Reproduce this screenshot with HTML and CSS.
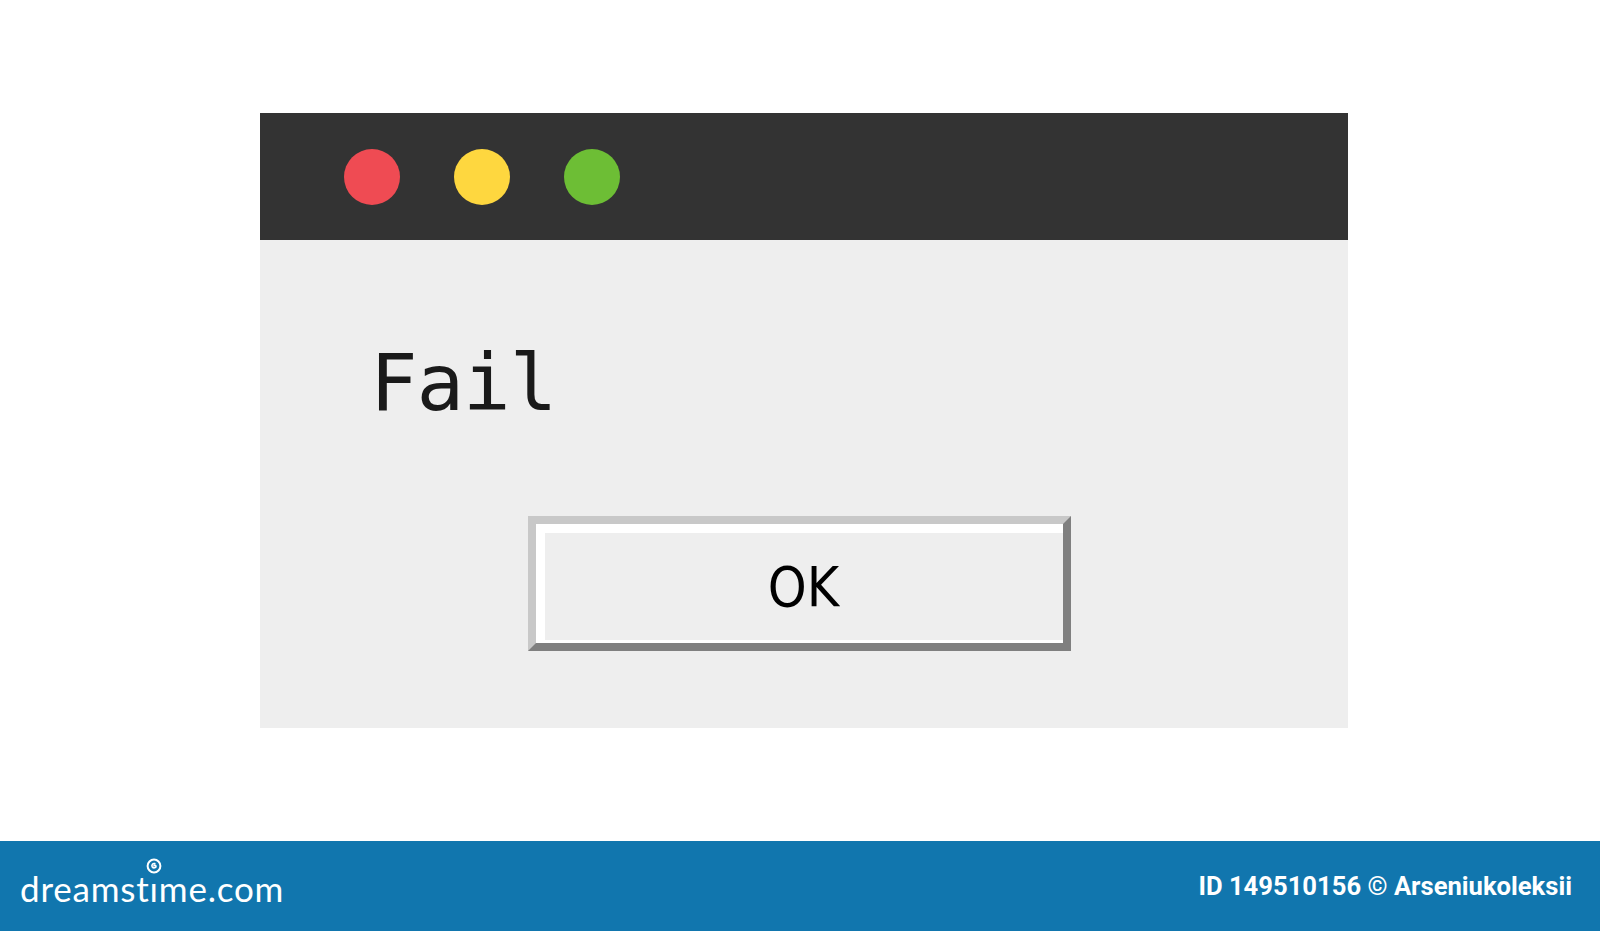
FILE: index.html
```html
<!DOCTYPE html>
<html lang="en">
<head>
    <meta charset="UTF-8">
    <title>Fail</title>
    <link rel="stylesheet" href="styles.css">
</head>
<body>
    <div class="stage">
        <div class="window">
            <div class="title-bar">
                <span class="dot dot-red"></span>
                <span class="dot dot-yellow"></span>
                <span class="dot dot-green"></span>
            </div>
            <div class="window-body">
                <h1 class="message">Fail</h1>
                <div class="actions">
                    <button class="ok-button" type="button">OK</button>
                </div>
            </div>
        </div>
    </div>
    <footer class="footer">
        <div class="logo">dreamst<span class="logo-i">ı<svg class="swirl" viewBox="0 0 16 16" width="16" height="16"><circle cx="8" cy="8" r="6.4" fill="none" stroke="#fff" stroke-width="2"/><path d="M8 8 C8 6.8 10 7 10 8.4 C10 10 7.4 10.4 6.3 9 C5.2 7.4 6.6 5.2 8.8 5.6" fill="none" stroke="#fff" stroke-width="1.6" stroke-linecap="round"/></svg></span>me.com</div>
        <div class="credit">ID 149510156 © Arseniukoleksii</div>
    </footer>
</body>
</html>
```

FILE: styles.css
```css
* {
    margin: 0;
    padding: 0;
    box-sizing: border-box;
}
body {
    background: #fff;
    height: 931px;
    display: flex;
    flex-direction: column;
    overflow: hidden;
}
.stage {
    flex: 1;
    padding: 113px 0 0 260px;
}
.window {
    width: 1088px;
    height: 615px;
    background: #eeeeee;
    display: flex;
    flex-direction: column;
}
.title-bar {
    height: 127px;
    background: #333333;
    display: flex;
    align-items: center;
    gap: 54px;
    padding-left: 84px;
}
.dot {
    width: 56px;
    height: 56px;
    border-radius: 50%;
}
.dot-red { background: #ef4b53; }
.dot-yellow { background: #fed73f; }
.dot-green { background: #6dbe35; }

.window-body {
    padding-top: 104px;
}
.message {
    font-family: "DejaVu Sans Mono", monospace;
    font-weight: normal;
    font-size: 79px;
    line-height: 79px;
    letter-spacing: -1px;
    color: #1a1a1a;
    padding-left: 110px;
}
.actions {
    margin-top: 93px;
    padding-left: 268px;
}
.ok-button {
    width: 543px;
    height: 135px;
    border: 8px solid;
    border-color: #c8c8c8 #7f7f7f #7f7f7f #c8c8c8;
    box-shadow: inset 9px 9px 0 #fff, inset 0 -3px 0 #fff;
    background: #eeeeee;
    font-family: "DejaVu Sans", sans-serif;
    font-stretch: condensed;
    font-size: 55px;
    color: #000;
    display: flex;
    align-items: center;
    justify-content: center;
    padding: 6px 0 0 8px;
}

/* Footer */
.footer {
    height: 90px;
    background: #1176ae;
    color: #fff;
    display: flex;
    align-items: center;
    justify-content: space-between;
    padding: 0 28px 0 20px;
}
.logo {
    font-family: Lato, sans-serif;
    font-size: 35px;
    letter-spacing: 0.8px;
    position: relative;
    top: 2px;
}
.logo-i {
    position: relative;
}
.swirl {
    position: absolute;
    left: -4px;
    top: -9px;
}
.credit {
    font-family: Roboto, sans-serif;
    font-weight: bold;
    font-size: 25.6px;
}
```
